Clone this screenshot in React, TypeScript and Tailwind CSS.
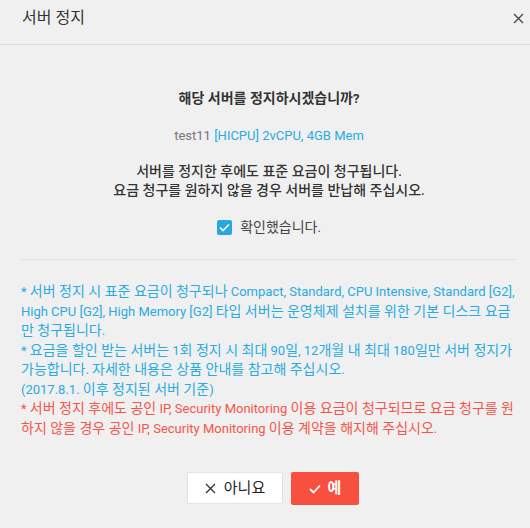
import React from "react";

function K({ t }: { t: string }) {
  const parts = t.split(/([\uAC00-\uD7A3]+(?:\s[\uAC00-\uD7A3]+)*)/);
  return (
    <>
      {parts.map((p, i) =>
        /[\uAC00-\uD7A3]/.test(p) ? (
          <span key={i} className="text-[14px]">
            {p}
          </span>
        ) : (
          <React.Fragment key={i}>{p}</React.Fragment>
        )
      )}
    </>
  );
}

export default function App() {
  const font = { fontFamily: 'Roboto, "Noto Sans CJK KR", sans-serif' };
  return (
    <div className="w-[530px] h-[528px] bg-[#f0f0f0] text-[#333]" style={font}>
      <div className="h-[45px] border-b border-[#dcdcdc] flex items-center justify-between pl-[22px] pr-[6px]">
        <span className="text-[16px] text-[#333] -mt-[9px]">서버 정지</span>
        <svg width="11" height="11" viewBox="0 0 11 11" className="-mt-[8px]">
          <path d="M1 1 L10 10 M10 1 L1 10" stroke="#444" strokeWidth="1.3" />
        </svg>
      </div>
      <div className="pl-[21px] pr-[13px]">
        <div className="flex flex-col items-center text-[13px] border-b border-[#dedede] pb-[22px]">
          <div className="mt-[44px] font-bold leading-[19px] text-[#333]">
            <K t="해당 서버를 정지하시겠습니까?" />
          </div>
          <div className="mt-[18px] leading-[19px]">
            <span className="text-[#777]">test11 </span>
            <span className="text-[#29abe2]">[HICPU] 2vCPU, 4GB Mem</span>
          </div>
          <div className="mt-[17px] font-medium leading-[19px] text-center text-[#333]">
            <K t="서버를 정지한 후에도 표준 요금이 청구됩니다." />
            <br />
            <K t="요금 청구를 원하지 않을 경우 서버를 반납해 주십시오." />
          </div>
          <div className="mt-[18px] flex items-center gap-[8px] leading-[19px]">
            <span className="w-[15px] h-[15px] rounded-[2px] bg-[#29a8e0] flex items-center justify-center">
              <svg width="11" height="9" viewBox="0 0 11 9">
                <path d="M1 4.5 L4 7.5 L10 1.5" stroke="#fff" strokeWidth="1.6" fill="none" />
              </svg>
            </span>
            <span className="text-[#444]">
              <K t="확인했습니다." />
            </span>
          </div>
        </div>
        <div className="mt-[22px] text-[13px] leading-[19.5px] whitespace-nowrap">
          <div className="text-[#29abe2]">
            <K t="* 서버 정지 시 표준 요금이 청구되나 Compact, Standard, CPU Intensive, Standard [G2]," />
            <br />
            <K t="High CPU [G2], High Memory [G2] 타입 서버는 운영체제 설치를 위한 기본 디스크 요금" />
            <br />
            <K t="만 청구됩니다." />
          </div>
          <div className="text-[#29abe2]">
            <K t="* 요금을 할인 받는 서버는 1회 정지 시 최대 90일, 12개월 내 최대 180일만 서버 정지가" />
            <br />
            <K t="가능합니다. 자세한 내용은 상품 안내를 참고해 주십시오." />
            <br />
            <K t="(2017.8.1. 이후 정지된 서버 기준)" />
          </div>
          <div className="text-[#f5554a]">
            <K t="* 서버 정지 후에도 공인 IP, Security Monitoring 이용 요금이 청구되므로 요금 청구를 원" />
            <br />
            <K t="하지 않을 경우 공인 IP, Security Monitoring 이용 계약을 해지해 주십시오." />
          </div>
        </div>
        <div className="mt-[34px] flex justify-center gap-[8px] pl-[8px]">
          <button className="w-[96px] h-[32px] bg-white border border-[#e2e2e2] rounded-[2px] flex items-center justify-center gap-[8px] text-[14px] text-[#222]">
            <svg width="11" height="11" viewBox="0 0 11 11">
              <path d="M1 1 L10 10 M10 1 L1 10" stroke="#333" strokeWidth="1.3" />
            </svg>
            <span className="text-[15px]">아니요</span>
          </button>
          <button className="w-[68px] h-[33px] bg-[#f8503e] rounded-[2px] flex items-center justify-center gap-[7px] text-white font-bold">
            <svg width="12" height="10" viewBox="0 0 12 10">
              <path d="M1 5 L4.5 8.5 L11 1.5" stroke="#fff" strokeWidth="1.8" fill="none" />
            </svg>
            <span className="text-[15px]">예</span>
          </button>
        </div>
      </div>
    </div>
  );
}
